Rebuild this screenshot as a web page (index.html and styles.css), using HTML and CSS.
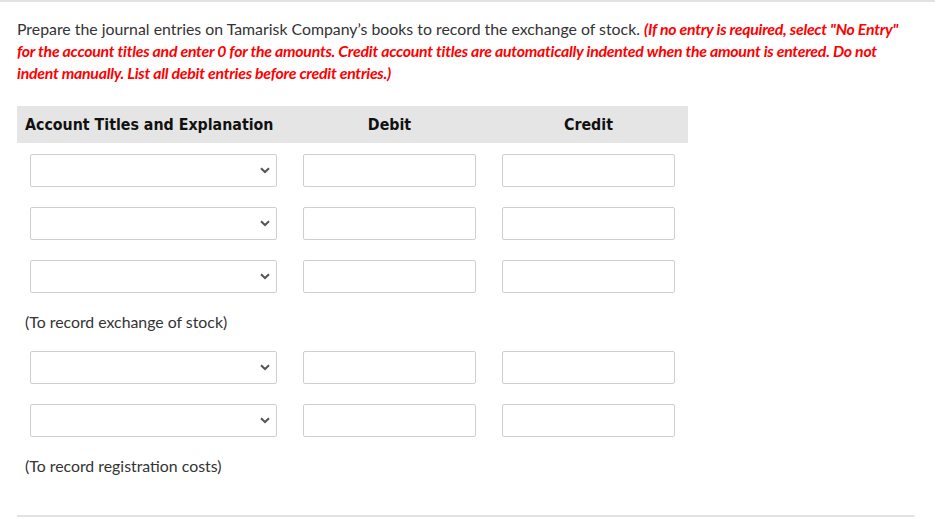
FILE: index.html
```html
<!DOCTYPE html>
<html>
<head>
<meta charset="utf-8">
<link rel="stylesheet" href="styles.css">
</head>
<body>
<div class="page">
  <p class="prompt">Prepare the journal entries on Tamarisk Company’s books to record the exchange of stock. <em class="note">(If no entry is required, select "No Entry" for the account titles and enter 0 for the amounts. Credit account titles are automatically indented when the amount is entered. Do not indent manually. List all debit entries before credit entries.)</em></p>

  <div class="journal">
    <div class="row head">
      <div class="c1">Account Titles and Explanation</div>
      <div class="c2">Debit</div>
      <div class="c3">Credit</div>
    </div>

    <div class="row">
      <div class="c1"><div class="select"><svg class="chev" width="10" height="7" viewBox="0 0 10 7"><path d="M1 1.2 L5 5 L9 1.2" fill="none" stroke="#555" stroke-width="2"/></svg></div></div>
      <div class="c2"><div class="input"></div></div>
      <div class="c3"><div class="input"></div></div>
    </div>
    <div class="row">
      <div class="c1"><div class="select"><svg class="chev" width="10" height="7" viewBox="0 0 10 7"><path d="M1 1.2 L5 5 L9 1.2" fill="none" stroke="#555" stroke-width="2"/></svg></div></div>
      <div class="c2"><div class="input"></div></div>
      <div class="c3"><div class="input"></div></div>
    </div>
    <div class="row">
      <div class="c1"><div class="select"><svg class="chev" width="10" height="7" viewBox="0 0 10 7"><path d="M1 1.2 L5 5 L9 1.2" fill="none" stroke="#555" stroke-width="2"/></svg></div></div>
      <div class="c2"><div class="input"></div></div>
      <div class="c3"><div class="input"></div></div>
    </div>
    <div class="expl">(To record exchange of stock)</div>

    <div class="row">
      <div class="c1"><div class="select"><svg class="chev" width="10" height="7" viewBox="0 0 10 7"><path d="M1 1.2 L5 5 L9 1.2" fill="none" stroke="#555" stroke-width="2"/></svg></div></div>
      <div class="c2"><div class="input"></div></div>
      <div class="c3"><div class="input"></div></div>
    </div>
    <div class="row">
      <div class="c1"><div class="select"><svg class="chev" width="10" height="7" viewBox="0 0 10 7"><path d="M1 1.2 L5 5 L9 1.2" fill="none" stroke="#555" stroke-width="2"/></svg></div></div>
      <div class="c2"><div class="input"></div></div>
      <div class="c3"><div class="input"></div></div>
    </div>
    <div class="expl">(To record registration costs)</div>
  </div>

  <div class="footer-line"></div>
</div>
</body>
</html>
```

FILE: styles.css
```css
html, body {
  margin: 0;
  padding: 0;
  background: #fff;
}
body {
  font-family: Lato, "Liberation Sans", sans-serif;
  color: #333;
  width: 941px;
  height: 519px;
  overflow: hidden;
}
.page {
  border-top: 2px solid #e2e2e2;
  width: 935px;
  padding: 0 0 0 17px;
  box-sizing: border-box;
}
.prompt {
  margin: 16px 0 0 0;
  width: 900px;
  font-size: 15.85px;
  line-height: 22px;
}
.note {
  color: #f00;
  font-weight: bold;
  font-style: italic;
  letter-spacing: -0.25px;
}
.journal {
  margin-top: 22px;
  width: 671px;
}
.row {
  display: flex;
  padding: 11px 0 9px 0;
}
.row.head {
  background: #e5e5e5;
  height: 37px;
  padding: 0;
  align-items: center;
  font-family: "DejaVu Sans Condensed", "DejaVu Sans", sans-serif;
  font-weight: bold;
  font-size: 15.8px;
  color: #111;
}
.c1 {
  width: 273px;
  padding: 0 13px;
  box-sizing: border-box;
}
.head .c1 {
  padding-left: 8px;
}
.c2, .c3 {
  width: 199px;
  padding: 0 13px;
  box-sizing: border-box;
  text-align: center;
}
.select, .input {
  height: 33px;
  border: 1px solid #cfcfcf;
  border-radius: 2px;
  box-sizing: border-box;
  background: #fff;
}
.select {
  display: flex;
  align-items: center;
  justify-content: flex-end;
  padding-right: 6px;
}
.chev {
  display: block;
}
.expl {
  height: 38px;
  display: flex;
  align-items: center;
  padding-left: 8px;
  font-size: 15.85px;
}
.footer-line {
  margin-top: 31px;
  width: 898px;
  height: 0;
  border-top: 2px solid #e2e2e2;
  border-radius: 0 2px 0 0;
}
```
